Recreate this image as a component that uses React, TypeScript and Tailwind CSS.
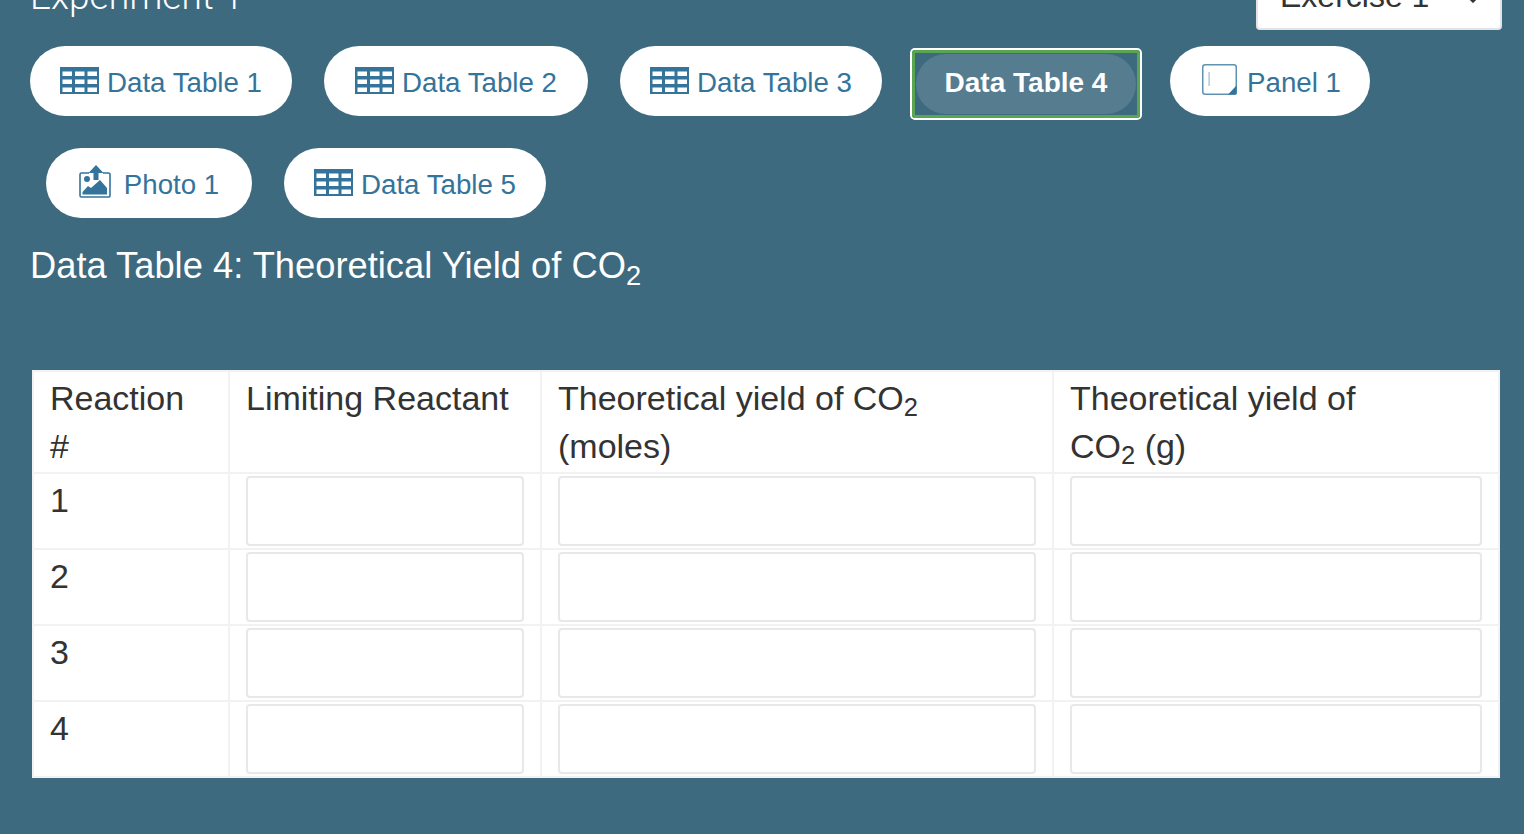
import { ReactNode } from "react";

const TableIcon = () => (
  <svg width="39" height="27" viewBox="0 0 39 27" className="mb-[2px] shrink-0">
    <rect x="0" y="0" width="39" height="27" fill="#34749a" />
    {[4, 12, 20].map((y) =>
      [2.5, 15, 27.5].map((x) => (
        <rect key={`${x}-${y}`} x={x} y={y + 0.5} width="9.5" height="4.5" fill="#fff" />
      ))
    )}
  </svg>
);

const PhotoIcon = () => (
  <svg width="33" height="33" viewBox="0 0 33 33" className="mb-[4px] shrink-0">
    <path d="M10 8H2.500A1.500 1.500 0 0 0 1 9.500v21A1.500 1.500 0 0 0 2.500 32h27a1.500 1.500 0 0 0 1.500-1.500v-21A1.500 1.500 0 0 0 29.500 8H24" fill="none" stroke="#34749a" strokeWidth="1.600" />
    <path d="M17 0l7.500 8H19.500v7h-5V8H9.500z" fill="#34749a" />
    <circle cx="8" cy="14" r="3" fill="#34749a" />
    <path d="M3.500 29.500V27L9 21l3 2 9-8 7 8v6.500z" fill="#34749a" />
  </svg>
);

const PanelIcon = () => (
  <svg width="35" height="31" viewBox="0 0 35 31" className="mb-[4px] ml-[3px] shrink-0">
    <rect x="0.750" y="0.750" width="33.500" height="29.500" rx="2.500" fill="#fff" stroke="#5f93b1" strokeWidth="1.500" />
    <path d="M34.500 21.500V30.500H26z" fill="#34749a" />
    <rect x="6.500" y="8" width="1.200" height="14" fill="#9dbdd0" />
  </svg>
);

const Pill = ({ icon, label, width, gap = "gap-2" }: { icon: ReactNode; label: string; width: string; gap?: string }) => (
  <button className={`flex h-[70px] items-center justify-center rounded-[35px] bg-white text-[27.700px] text-[#34749a] ${width} ${gap}`}>
    {icon}
    <span className="pt-[3px]">{label}</span>
  </button>
);

const Input = () => (
  <div className="h-[70px] w-full rounded-[4px] border-2 border-[#e8e8e8] bg-white" />
);

const rows = [1, 2, 3, 4];

export default function App() {
  return (
    <div className="h-[834px] w-[1524px] overflow-hidden bg-[#3d6a7f] font-['Liberation_Sans',Arial,sans-serif]">
      <div className="-mt-[31px] flex items-start justify-between pl-[30px] pr-[22px]">
        <div className="mt-[5px] font-['Roboto',sans-serif] text-[37px] leading-[46px] font-light text-white">Experiment 1</div>
        <div className="flex h-[61px] w-[246px] items-center justify-between rounded-[4px] border-2 border-[#e4e4e4] bg-white pr-[20px] pb-[8px] pl-[22px] text-[32px] text-[#333]">
          <span>Exercise 1</span>
          <svg width="14" height="9" viewBox="0 0 14 9" className="mt-[6px]"><path d="M1.500 1.500L7 7l5.500-5.500" fill="none" stroke="#333" strokeWidth="3" /></svg>
        </div>
      </div>

      <div className="mt-[16px] flex items-start pl-[30px]">
        <Pill icon={<TableIcon />} label="Data Table 1" width="w-[262px]" />
        <div className="ml-[32px]"><Pill icon={<TableIcon />} label="Data Table 2" width="w-[264px]" /></div>
        <div className="ml-[32px]"><Pill icon={<TableIcon />} label="Data Table 3" width="w-[262px]" /></div>
        <div className="mt-[2px] ml-[28px] h-[72px] w-[232px] rounded-[5px] border-2 border-white">
          <div className="h-full w-full rounded-[3px] border-[3px] border-[#5aa552] p-[1px]">
            <div className="flex h-full items-center justify-center rounded-full bg-[#567c90] pb-[2px] text-[28px] font-bold text-white">Data Table 4</div>
          </div>
        </div>
        <div className="ml-[28px]"><Pill icon={<PanelIcon />} label="Panel 1" width="w-[200px]" gap="gap-[10px]" /></div>
      </div>

      <div className="mt-[28px] flex gap-[32px] pl-[46px]">
        <Pill icon={<PhotoIcon />} label="Photo 1" width="w-[206px]" gap="gap-3" />
        <Pill icon={<TableIcon />} label="Data Table 5" width="w-[262px]" />
      </div>

      <h2 className="mt-[24px] ml-[30px] text-[36.300px] leading-[48px] font-normal text-white">
        Data Table 4: Theoretical Yield of CO<sub>2</sub>
      </h2>

      <table className="mt-[80px] ml-[32px] w-[1468px] table-fixed border-collapse bg-white text-[34px] leading-[48px] text-[#333]">
        <colgroup>
          <col className="w-[196px]" />
          <col className="w-[312px]" />
          <col className="w-[512px]" />
          <col />
        </colgroup>
        <thead>
          <tr>
            <th className="border-2 border-[#f2f2f2] px-4 py-[2px] text-left align-top font-normal">Reaction<br />#</th>
            <th className="border-2 border-[#f2f2f2] px-4 py-[2px] text-left align-top font-normal">Limiting Reactant</th>
            <th className="border-2 border-[#f2f2f2] px-4 py-[2px] text-left align-top font-normal">Theoretical yield of CO<sub>2</sub><br />(moles)</th>
            <th className="border-2 border-[#f2f2f2] px-4 py-[2px] text-left align-top font-normal">Theoretical yield of<br />CO<sub>2</sub> (g)</th>
          </tr>
        </thead>
        <tbody>
          {rows.map((r) => (
            <tr key={r}>
              <td className="border-2 border-[#f2f2f2] px-4 py-[2px] align-top">{r}</td>
              <td className="border-2 border-[#f2f2f2] px-4 py-[2px] align-top"><Input /></td>
              <td className="border-2 border-[#f2f2f2] px-4 py-[2px] align-top"><Input /></td>
              <td className="border-2 border-[#f2f2f2] px-4 py-[2px] align-top"><Input /></td>
            </tr>
          ))}
        </tbody>
      </table>
    </div>
  );
}
